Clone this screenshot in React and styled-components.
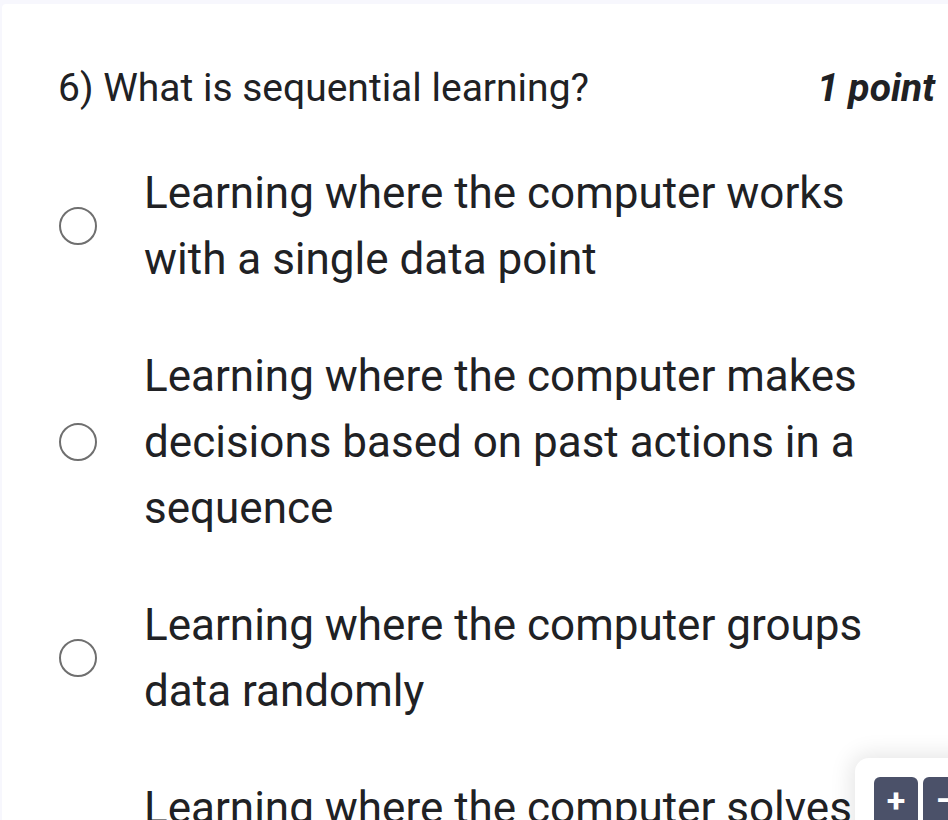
import styled, { createGlobalStyle } from 'styled-components';

const GlobalStyle = createGlobalStyle`
  body {
    margin: 0;
    background: #f7f7fd;
    font-family: Roboto, "Liberation Sans", sans-serif;
    overflow: hidden;
  }
`;

const options = [
  'Learning where the computer works with a single data point',
  'Learning where the computer makes decisions based on past actions in a sequence',
  'Learning where the computer groups data randomly',
  'Learning where the computer solves problems without any order',
];

function App() {
  return (
    <>
      <GlobalStyle />
      <Page>
        <Card>
          <Header>
            <Question>6) What is sequential learning?</Question>
            <Points>1 point</Points>
          </Header>
          <OptionList>
            {options.map((text) => (
              <Option key={text}>
                <Radio />
                <OptionText>{text}</OptionText>
              </Option>
            ))}
          </OptionList>
        </Card>
        <Zoomer>
          <ZoomButton>+</ZoomButton>
          <ZoomButton>−</ZoomButton>
        </Zoomer>
      </Page>
    </>
  );
}

const Page = styled.div`
  position: relative;
  height: 820px;
  overflow: hidden;
  padding: 4px 0 0 2px;
  box-sizing: border-box;
`;

const Card = styled.div`
  background: #fff;
  height: 100%;
  border-top-left-radius: 4px;
  padding: 0 13px 0 56px;
`;

const Header = styled.div`
  display: flex;
  justify-content: space-between;
  align-items: center;
  padding-top: 62px;
  color: #202124;
`;

const Question = styled.div`
  font-size: 39px;
  line-height: 44px;
`;

const Points = styled.div`
  font-size: 39px;
  line-height: 44px;
  font-weight: 700;
  font-style: italic;
`;

const OptionList = styled.div`
  display: flex;
  flex-direction: column;
  gap: 51px;
  margin-top: 50px;
`;

const Option = styled.div`
  display: flex;
  align-items: center;
  gap: 47px;
`;

const Radio = styled.div`
  flex: none;
  width: 34px;
  height: 34px;
  border: 2.5px solid #6f6f6f;
  border-radius: 50%;
  margin-left: 1px;
`;

const OptionText = styled.div`
  color: #202124;
  font-size: 44px;
  line-height: 66px;
  max-width: 720px;
`;

const Zoomer = styled.div`
  position: absolute;
  left: 855px;
  top: 758px;
  width: 120px;
  height: 100px;
  background: #fff;
  border-radius: 14px;
  box-shadow: 0 0 22px 4px rgba(0, 0, 0, 0.1);
  display: flex;
  gap: 5px;
  padding: 19px 0 0 19px;
  box-sizing: border-box;
`;

const ZoomButton = styled.div`
  width: 44px;
  height: 50px;
  background: #4b5169;
  color: #fff;
  border-radius: 6px;
  font-size: 34px;
  font-weight: 700;
  line-height: 46px;
  text-align: center;
`;

export default App;
